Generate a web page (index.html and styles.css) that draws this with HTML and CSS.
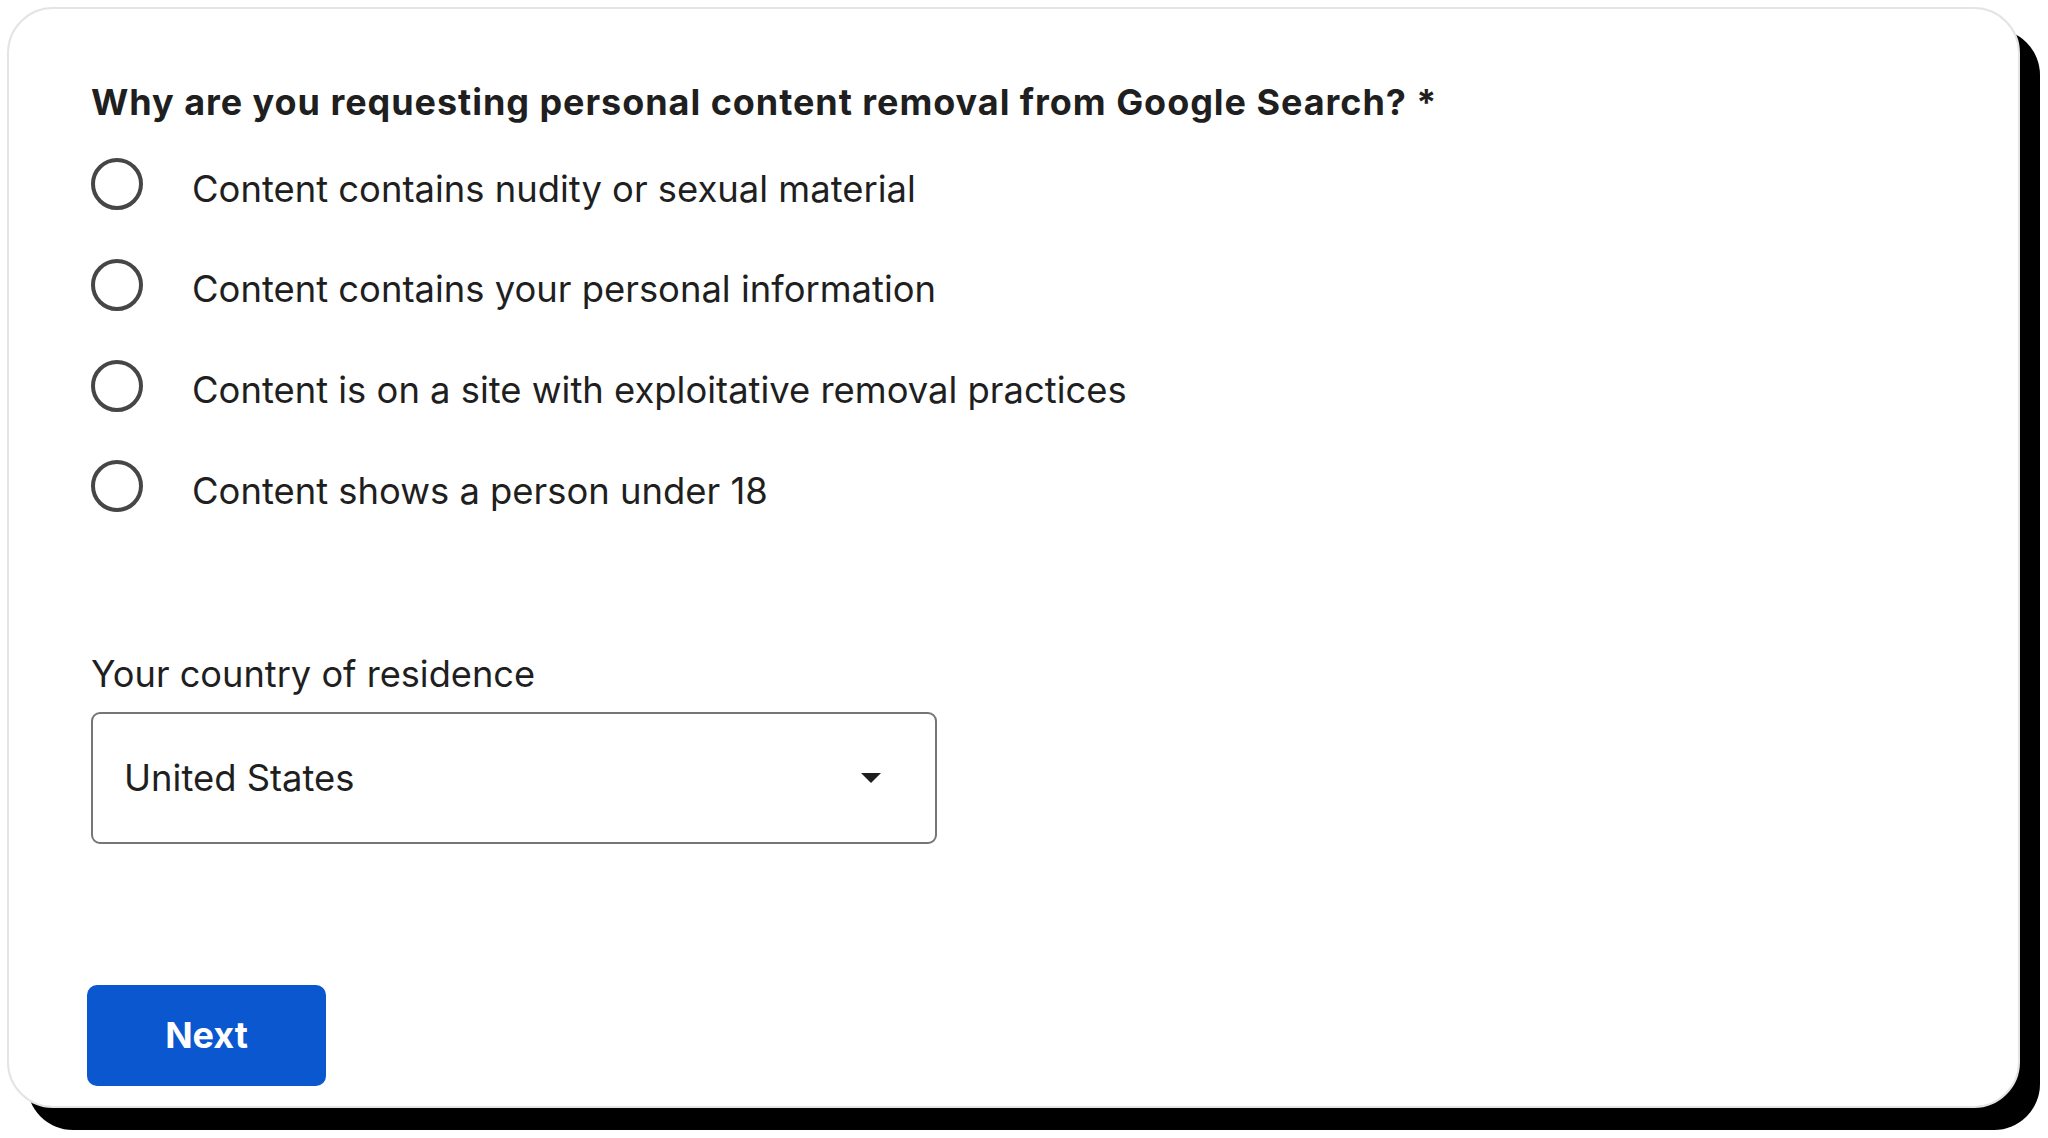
FILE: index.html
```html
<!DOCTYPE html>
<html lang="en">
<head>
<meta charset="utf-8">
<title>Personal content removal</title>
<link rel="stylesheet" href="styles.css">
</head>
<body>
<main class="card">
  <h1 class="question">Why are you requesting personal content removal from Google Search? *</h1>
  <div class="options" role="radiogroup">
    <label class="option"><span class="radio"></span><span class="option-text">Content contains nudity or sexual material</span></label>
    <label class="option"><span class="radio"></span><span class="option-text">Content contains your personal information</span></label>
    <label class="option"><span class="radio"></span><span class="option-text">Content is on a site with exploitative removal practices</span></label>
    <label class="option"><span class="radio"></span><span class="option-text">Content shows a person under 18</span></label>
  </div>
  <div class="field-label">Your country of residence</div>
  <div class="select">
    <span class="select-value">United States</span>
    <svg class="select-arrow" viewBox="7 10 10 5" width="20" height="10" aria-hidden="true"><path d="M7 10l5 5 5-5z" fill="#1f1f1f"/></svg>
  </div>
  <button class="next" type="button">Next</button>
</main>
</body>
</html>
```

FILE: styles.css
```css
* { box-sizing: border-box; }
html, body { margin: 0; background: #ffffff; }
body {
  min-height: 1138px;
  padding: 7px 0 30px 7px;
  font-family: Inter, "Noto Sans", sans-serif;
  color: #1f1f1f;
}
.card {
  width: 2013px;
  height: 1101px;
  border: 2px solid #e4e4e4;
  border-radius: 46px;
  background: #ffffff;
  box-shadow: 20px 22px 0 #000000;
  padding: 71px 0 0 82px;
  display: flex;
  flex-direction: column;
  align-items: flex-start;
}
.question {
  margin: 0;
  font-size: 36px;
  line-height: 44px;
  font-weight: 700;
  letter-spacing: 0.95px;
  color: #1f1f1f;
}
.options {
  margin-top: 10px;
  display: flex;
  flex-direction: column;
}
.option {
  height: 100.67px;
  display: flex;
  align-items: center;
}
.radio {
  width: 52px;
  height: 52px;
  border: 4px solid #444746;
  border-radius: 50%;
  flex: none;
}
.option-text {
  margin-left: 49px;
  padding-top: 9px;
  font-size: 36.4px;
  line-height: 44px;
  color: #1f1f1f;
}
.field-label {
  margin-top: 115px;
  font-size: 36.2px;
  line-height: 44px;
  color: #1f1f1f;
}
.select {
  margin-top: 16px;
  width: 846px;
  height: 132px;
  border: 2px solid #747775;
  border-radius: 9px;
  display: flex;
  align-items: center;
  justify-content: space-between;
  padding: 0 54px 0 31px;
}
.select-value {
  font-size: 36.4px;
  line-height: 44px;
  color: #1f1f1f;
}
.select-arrow { display: block; }
.next {
  margin-top: 141px;
  margin-left: -4px;
  width: 239px;
  height: 101px;
  border: 0;
  border-radius: 10px;
  background: #0b57d0;
  color: #ffffff;
  font-family: Inter, "Noto Sans", sans-serif;
  font-size: 36px;
  font-weight: 700;
  padding: 0;
}
```
